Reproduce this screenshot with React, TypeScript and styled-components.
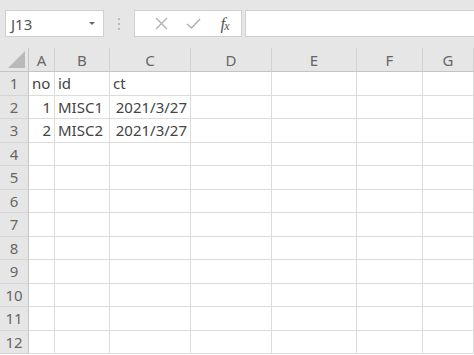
import React from "react";
import styled, { createGlobalStyle } from "styled-components";

const Global = createGlobalStyle`
  html, body { margin: 0; padding: 0; }
  body { width: 474px; height: 355px; overflow: hidden; background: #fff;
    font-family: "Noto Sans", "Noto Sans CJK JP", sans-serif; }
`;

const Page = styled.div`
  width: 474px;
  height: 355px;
  display: flex;
  flex-direction: column;
  overflow: hidden;
  background: #e6e6e6;
`;

const Toolbar = styled.div`
  height: 48px;
  flex: none;
  display: flex;
  align-items: flex-start;
  padding: 10px 0 0 5px;
  box-sizing: border-box;
  background: #e6e6e6;
`;

const NameBox = styled.div`
  width: 99px;
  height: 27px;
  box-sizing: border-box;
  background: #fff;
  border: 1px solid #d0d0d0;
  display: flex;
  align-items: center;
  justify-content: space-between;
  padding: 0 8px 0 5px;
  color: #555;
  font-size: 15px;
`;

const Caret = styled.span`
  width: 0;
  height: 0;
  border-left: 3px solid transparent;
  border-right: 3px solid transparent;
  border-top: 3px solid #666;
`;

const Dots = styled.div`
  width: 30px;
  height: 27px;
  display: flex;
  flex-direction: column;
  align-items: center;
  justify-content: center;
  gap: 3px;
  span { width: 2px; height: 2px; background: #aaa; border-radius: 1px; }
`;

const IconBox = styled.div`
  width: 108px;
  height: 27px;
  box-sizing: border-box;
  background: #fff;
  border: 1px solid #d0d0d0;
  display: flex;
  align-items: center;
  padding-left: 10px;
`;

const IconSlot = styled.div`
  width: 35px;
  height: 25px;
  display: flex;
  align-items: center;
  justify-content: center;
`;

const Fx = styled.span`
  font-family: "Liberation Serif", serif;
  font-style: italic;
  font-size: 17px;
  color: #555;
  line-height: 1;
  sub { font-size: 12px; vertical-align: -1px; margin-left: -1px; }
`;

const FormulaInput = styled.div`
  flex: 1;
  height: 27px;
  margin-left: 3px;
  box-sizing: border-box;
  background: #fff;
  border: 1px solid #d0d0d0;
  border-right: none;
`;

const Sheet = styled.div`
  flex: 1;
  display: grid;
  grid-template-columns: 29px 26px 55px 81px 81px 85px 66px 1fr;
  grid-auto-rows: 23.5px;
  grid-template-rows: 24px;
  background: #fff;
`;

const Corner = styled.div`
  background: #e6e6e6;
  border-right: 1px solid #c4c4c4;
  border-bottom: 1px solid #c4c4c4;
  box-sizing: border-box;
  display: flex;
  align-items: flex-end;
  justify-content: flex-end;
  padding: 0 2px 3px 0;
`;

const ColHead = styled.div`
  background: #e6e6e6;
  border-right: 1px solid #d2d2d2;
  border-bottom: 1px solid #c4c4c4;
  box-sizing: border-box;
  display: flex;
  align-items: center;
  justify-content: center;
  color: #666;
  font-size: 15px;
  padding-top: 1px;
`;

const RowHead = styled.div`
  background: #e6e6e6;
  border-right: 1px solid #c4c4c4;
  border-bottom: 1px solid #d4d4d4;
  box-sizing: border-box;
  display: flex;
  align-items: center;
  justify-content: center;
  color: #666;
  font-size: 15px;
`;

const Cell = styled.div<{ $right?: boolean }>`
  border-right: 1px solid #dcdcdc;
  border-bottom: 1px solid #dcdcdc;
  box-sizing: border-box;
  display: flex;
  align-items: center;
  justify-content: ${(p) => (p.$right ? "flex-end" : "flex-start")};
  padding: 0 3px;
  color: #444;
  font-size: 15px;
  white-space: nowrap;
`;

const cols = ["A", "B", "C", "D", "E", "F", "G"];
const data: Record<number, { v: string; r?: boolean }[]> = {
  1: [{ v: "no" }, { v: "id" }, { v: "ct" }],
  2: [{ v: "1", r: true }, { v: "MISC1" }, { v: "2021/3/27", r: true }],
  3: [{ v: "2", r: true }, { v: "MISC2" }, { v: "2021/3/27", r: true }],
};

export default function App() {
  const rows = Array.from({ length: 12 }, (_, i) => i + 1);
  return (
    <Page>
      <Global />
      <Toolbar>
        <NameBox>
          J13
          <Caret />
        </NameBox>
        <Dots>
          <span />
          <span />
          <span />
        </Dots>
        <IconBox>
          <IconSlot>
            <svg width="15" height="15" viewBox="0 0 15 15">
              <path d="M2 2L13 13M13 2L2 13" stroke="#b0b0b0" strokeWidth="1.3" fill="none" />
            </svg>
          </IconSlot>
          <IconSlot>
            <svg width="17" height="15" viewBox="0 0 17 15">
              <path d="M2 8L6.5 12L15 3" stroke="#b0b0b0" strokeWidth="1.5" fill="none" />
            </svg>
          </IconSlot>
          <IconSlot>
            <Fx>
              f<sub>x</sub>
            </Fx>
          </IconSlot>
        </IconBox>
        <FormulaInput />
      </Toolbar>
      <Sheet>
        <Corner>
          <svg width="18" height="17" viewBox="0 0 18 17">
            <polygon points="0,17 17,0 17,17" fill="#b9b9b9" />
          </svg>
        </Corner>
        {cols.map((c) => (
          <ColHead key={c}>{c}</ColHead>
        ))}
        {rows.map((r) => (
          <React.Fragment key={r}>
            <RowHead>{r}</RowHead>
            {cols.map((c, ci) => {
              const d = data[r]?.[ci];
              return (
                <Cell key={c} $right={d?.r}>
                  {d?.v ?? ""}
                </Cell>
              );
            })}
          </React.Fragment>
        ))}
      </Sheet>
    </Page>
  );
}
